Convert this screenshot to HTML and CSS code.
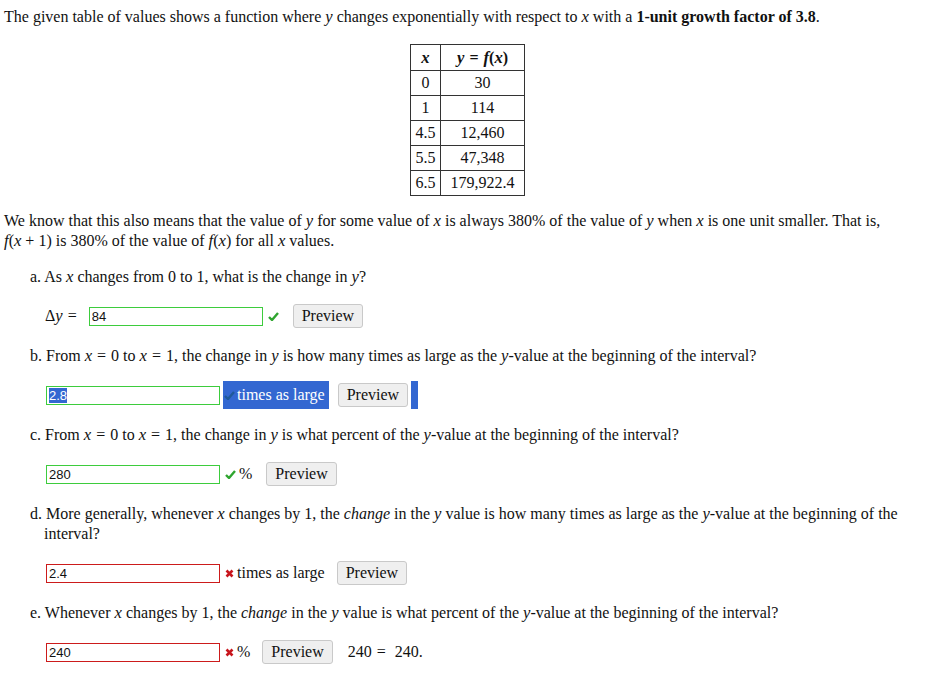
FILE: index.html
```html
<!DOCTYPE html>
<html>
<head>
<meta charset="utf-8">
<link rel="stylesheet" href="styles.css">
</head>
<body>
<p class="intro">The given table of values shows a function where <i class="m">y</i> changes exponentially with respect to <i class="m">x</i> with a <b>1-unit growth factor of 3.8</b>.</p>

<table class="vals">
  <tr><th><i class="m">x</i></th><th><i class="m">y</i><span class="eq">=</span><i class="m">f</i>(<i class="m">x</i>)</th></tr>
  <tr><td>0</td><td>30</td></tr>
  <tr><td>1</td><td>114</td></tr>
  <tr><td>4.5</td><td>12,460</td></tr>
  <tr><td>5.5</td><td>47,348</td></tr>
  <tr><td>6.5</td><td>179,922.4</td></tr>
</table>

<p class="know">We know that this also means that the value of <i class="m">y</i> for some value of <i class="m">x</i> is always 380% of the value of <i class="m">y</i> when <i class="m">x</i> is one unit smaller. That is, <i class="m">f</i>(<i class="m">x</i><span class="op">+</span>1) is 380% of the value of <i class="m">f</i>(<i class="m">x</i>) for all <i class="m">x</i> values.</p>

<div class="part">
  <p class="q">a. As <i class="m">x</i> changes from 0 to 1, what is the change in <i class="m">y</i>?</p>
  <div class="row">
    <span class="lbl">Δ<i class="m">y</i><span class="eq">=</span></span>
    <input class="ans ok" value="84">
    <svg class="ic" width="11" height="9" viewBox="0 0 11 9"><path d="M1 5 L4 8 L10 1" fill="none" stroke="#2fa52f" stroke-width="2.4"/></svg>
    <button class="pv pv-a">Preview</button>
  </div>
</div>

<div class="part">
  <p class="q">b. From <i class="m">x</i><span class="eq">=</span>0 to <i class="m">x</i><span class="eq">=</span>1, the change in <i class="m">y</i> is how many times as large as the <i class="m">y</i>-value at the beginning of the interval?</p>
  <div class="row">
    <span class="ans ok fake"><span class="sel">2.8</span></span>
    <span class="selblock"><svg class="ic" width="11" height="9" viewBox="0 0 11 9"><path d="M1 5 L4 8 L10 1" fill="none" stroke="#1f5a9a" stroke-width="2.4"/></svg><span class="seltxt">times as large</span></span>
    <button class="pv pv-b">Preview</button>
    <span class="selbar"></span>
  </div>
</div>

<div class="part">
  <p class="q">c. From <i class="m">x</i><span class="eq">=</span>0 to <i class="m">x</i><span class="eq">=</span>1, the change in <i class="m">y</i> is what percent of the <i class="m">y</i>-value at the beginning of the interval?</p>
  <div class="row">
    <input class="ans ok" value="280">
    <svg class="ic" width="11" height="9" viewBox="0 0 11 9"><path d="M1 5 L4 8 L10 1" fill="none" stroke="#2fa52f" stroke-width="2.4"/></svg>
    <span class="unit">%</span>
    <button class="pv pv-c">Preview</button>
  </div>
</div>

<div class="part">
  <p class="q">d. More generally, whenever <i class="m">x</i> changes by 1, the <i>change</i> in the <i class="m">y</i> value is how many times as large as the <i class="m">y</i>-value at the beginning of the interval?</p>
  <div class="row">
    <input class="ans bad" value="2.4">
    <svg class="ic" width="9" height="9" viewBox="0 0 9 9"><path d="M1.5 1.5 L7.5 7.5 M7.5 1.5 L1.5 7.5" fill="none" stroke="#c8161d" stroke-width="2.6"/></svg>
    <span class="unit">times as large</span>
    <button class="pv pv-d">Preview</button>
  </div>
</div>

<div class="part">
  <p class="q">e. Whenever <i class="m">x</i> changes by 1, the <i>change</i> in the <i class="m">y</i> value is what percent of the <i class="m">y</i>-value at the beginning of the interval?</p>
  <div class="row">
    <input class="ans bad" value="240">
    <svg class="ic" width="9" height="9" viewBox="0 0 9 9"><path d="M1.5 1.5 L7.5 7.5 M7.5 1.5 L1.5 7.5" fill="none" stroke="#c8161d" stroke-width="2.6"/></svg>
    <span class="unit">%</span>
    <button class="pv pv-e">Preview</button>
    <span class="res">240<span class="eq">=</span>&nbsp;240.</span>
  </div>
</div>
</body>
</html>
```

FILE: styles.css
```css
html, body {
  margin: 0;
  padding: 0;
  background: #fff;
}
body {
  font-family: "Liberation Serif", "Times New Roman", serif;
  font-size: 16px;
  line-height: 20px;
  color: #111;
  padding: 7px 4px 0 4px;
}
.m {
  font-family: "Liberation Serif", serif;
  font-style: italic;
  font-size: 1.04em;
}
.eq {
  padding: 0 5px;
}
.op {
  padding: 0 4px;
}
.intro {
  margin: 0;
}
.vals {
  border-collapse: collapse;
  margin: 17px auto 0;
  position: relative;
  left: -2px;
}
.vals th, .vals td {
  border: 1px solid #333;
  text-align: center;
  padding: 0 4px;
  height: 24px;
  line-height: 20px;
}
.vals th {
  height: 25px;
  font-weight: bold;
}
.vals td:first-child, .vals th:first-child {
  width: 21px;
}
.vals td:last-child {
  width: 75px;
}
.know {
  margin: 15px 0 0;
  max-width: 895px;
}
.part {
  padding-left: 26px;
  margin-top: 16px;
}
.part + .part {
  margin-top: 18px;
}
.q {
  margin: 0;
  padding-left: 14px;
  text-indent: -14px;
}
.row {
  display: flex;
  align-items: center;
  height: 24px;
  margin-top: 17px;
  margin-left: 16px;
}
.lbl {
  margin-right: 7px;
  margin-left: -1px;
}
.ans {
  box-sizing: border-box;
  width: 174px;
  height: 19px;
  font-family: "Liberation Sans", Arial, sans-serif;
  font-size: 13px;
  padding: 0 2px;
  margin: 0;
  border: 1px solid;
  outline: none;
  color: #111;
  background: #fff;
}
.ok { border-color: #3dcc3d; }
.bad { border-color: #cc1b1b; }
.fake {
  display: inline-flex;
  align-items: center;
  line-height: 15px;
}
.sel {
  background: #3367d1;
  color: #fff;
}
.ic {
  margin-left: 5px;
  flex: none;
}
.selblock {
  display: inline-flex;
  align-items: center;
  background: #3367d1;
  height: 28px;
  margin-left: 3px;
  padding-right: 4px;
}
.selblock .ic {
  margin-left: 1px;
}
.seltxt {
  color: #fff;
  margin-left: 2px;
}
.selbar {
  display: inline-block;
  width: 7px;
  height: 28px;
  background: #3367d1;
  margin-left: 3px;
}
.unit {
  margin-left: 3px;
}
.pv {
  font-family: "Liberation Serif", "Times New Roman", serif;
  font-size: 16px;
  color: #111;
  background: #efefef;
  border: 1px solid #c9c9c9;
  border-radius: 3px;
  height: 24px;
  padding: 0 8px;
  margin-left: 14px;
  line-height: 20px;
}
.pv-a { margin-left: 14px; }
.pv-b { margin-left: 9px; }
.pv-d { margin-left: 12px; }
.pv-e { margin-left: 12px; }
.res {
  margin-left: 15px;
}
```
